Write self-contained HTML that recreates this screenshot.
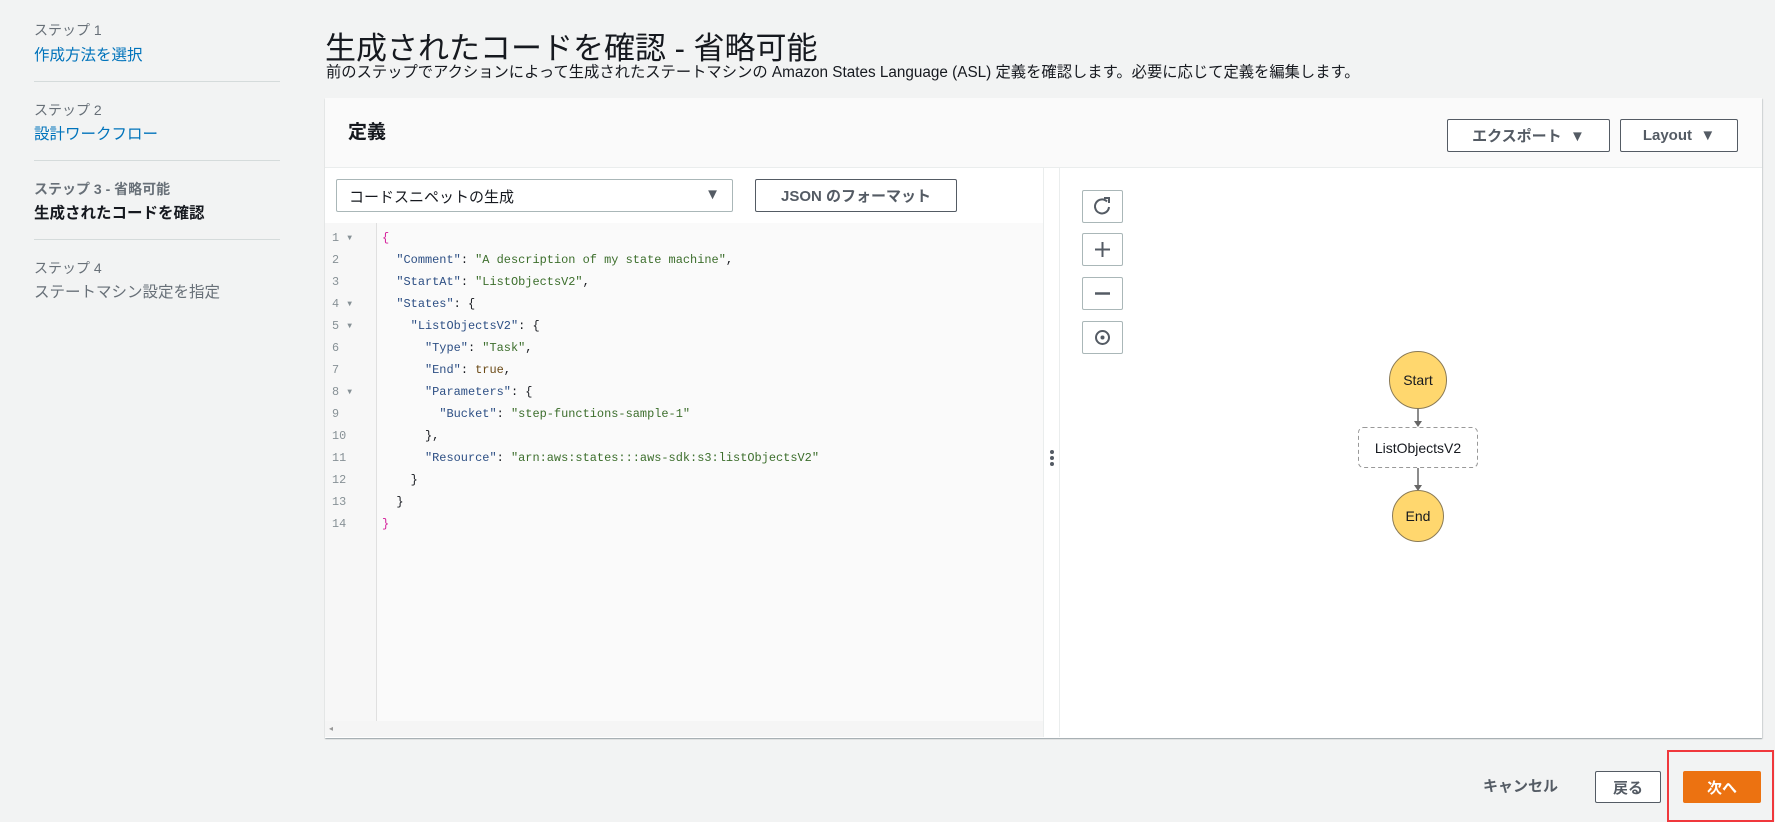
<!DOCTYPE html>
<html><head><meta charset="utf-8"><style>
*{margin:0;padding:0;box-sizing:border-box}
body{width:1775px;height:822px;background:#f2f3f3;font-family:"Liberation Sans","Noto Sans CJK JP",sans-serif;color:#16191f;position:relative;overflow:hidden}
.a{position:absolute}
.sl{font-size:14px;color:#687078}
.lk{font-size:15.5px;color:#0073bb}
.hr{position:absolute;left:34px;width:246px;height:1px;background:#d5dbdb}
.btn{position:absolute;border:1px solid #545b64;background:#fff;border-radius:2px;font-weight:bold;font-size:15px;color:#545b64;display:flex;align-items:center;justify-content:center}
.gb{position:absolute;left:1082px;width:41px;height:33px;border:1px solid #aab7b8;background:#fff;border-radius:2px}
.code{position:absolute;left:382px;top:227px;font-family:"Liberation Mono",monospace;font-size:11.95px;line-height:22px;white-space:pre;color:#16191f}
.ln{position:absolute;left:325px;top:227px;width:52px;font-family:"Liberation Mono",monospace;font-size:11.8px;line-height:22px;color:#879196;white-space:pre;padding-left:7px}
.k{color:#2d4f84}.s{color:#3c6e2c}.m{color:#d5209b}.b{color:#6b4a16}
</style></head><body>
<div class="a sl" style="left:34px;top:20px">ステップ 1</div>
<div class="a lk" style="left:34px;top:43px">作成方法を選択</div>
<div class="hr" style="top:81px"></div>
<div class="a sl" style="left:34px;top:100px">ステップ 2</div>
<div class="a lk" style="left:34px;top:122px">設計ワークフロー</div>
<div class="hr" style="top:160px"></div>
<div class="a sl" style="left:34px;top:179px;font-weight:bold">ステップ 3 - 省略可能</div>
<div class="a" style="left:34px;top:201px;font-size:15.5px;font-weight:bold">生成されたコードを確認</div>
<div class="hr" style="top:239px"></div>
<div class="a sl" style="left:34px;top:258px">ステップ 4</div>
<div class="a sl" style="left:34px;top:280px;font-size:15.5px">ステートマシン設定を指定</div>

<div class="a" style="left:325px;top:23px;font-size:31px;color:#16191f">生成されたコードを確認 - 省略可能</div>
<div class="a" style="left:326px;top:60px;font-size:15.3px;color:#16191f;white-space:nowrap">前のステップでアクションによって生成されたステートマシンの Amazon States Language (ASL) 定義を確認します。必要に応じて定義を編集します。</div>

<div class="a" style="left:325px;top:98px;width:1437px;height:640px;background:#fff;box-shadow:0 1px 1px rgba(0,28,36,.3),1px 1px 1px rgba(0,28,36,.1)">
 <div style="height:70px;background:#fafafa;border-bottom:1px solid #eaeded"></div>
</div>
<div class="a" style="left:348px;top:117px;font-size:19px;font-weight:bold">定義</div>
<div class="btn" style="left:1447px;top:119px;width:163px;height:33px">エクスポート &nbsp;▼</div>
<div class="btn" style="left:1620px;top:119px;width:118px;height:33px">Layout &nbsp;▼</div>

<div class="a" style="left:336px;top:179px;width:397px;height:33px;border:1px solid #aab7b8;background:#fff;border-radius:2px;font-size:15px;padding:6px 12px">コードスニペットの生成<span style="position:absolute;right:12px;top:6px;color:#545b64">▼</span></div>
<div class="btn" style="left:755px;top:179px;width:202px;height:33px">JSON のフォーマット</div>

<div class="a" style="left:325px;top:223px;width:718px;height:498px;background:#fafafa"></div>
<div class="a" style="left:325px;top:223px;width:52px;height:498px;background:#f7f7f7;border-right:1px solid #e0e0e0"></div>
<div class="a" style="left:325px;top:721px;width:718px;height:16px;background:#f5f5f5;font-size:8px;color:#999;padding:3px 4px">◂</div>
<div class="a" style="left:1043px;top:168px;width:17px;height:569px;background:#fff;border-left:1px solid #eaeded;border-right:1px solid #eaeded"></div>
<div class="a" style="left:1050px;top:450px;width:4px;height:4px;border-radius:2px;background:#545b64;box-shadow:0 6px 0 #545b64,0 12px 0 #545b64"></div>

<div class="ln">1 ▾
2
3
4 ▾
5 ▾
6
7
8 ▾
9
10
11
12
13
14</div>
<div class="code"><span class="m">{</span>
  <span class="k">"Comment"</span>: <span class="s">"A description of my state machine"</span>,
  <span class="k">"StartAt"</span>: <span class="s">"ListObjectsV2"</span>,
  <span class="k">"States"</span>: {
    <span class="k">"ListObjectsV2"</span>: {
      <span class="k">"Type"</span>: <span class="s">"Task"</span>,
      <span class="k">"End"</span>: <span class="b">true</span>,
      <span class="k">"Parameters"</span>: {
        <span class="k">"Bucket"</span>: <span class="s">"step-functions-sample-1"</span>
      },
      <span class="k">"Resource"</span>: <span class="s">"arn:aws:states:::aws-sdk:s3:listObjectsV2"</span>
    }
  }
<span class="m">}</span></div>

<div class="gb" style="top:190px"><svg width="39" height="31" viewBox="0 0 39 31"><path d="M24 10.5A7 7 0 1 0 26 16" fill="none" stroke="#545b64" stroke-width="2"/><path d="M21 7l5 0 0 5" fill="none" stroke="#545b64" stroke-width="2"/></svg></div>
<div class="gb" style="top:233px"><svg width="39" height="31"><path d="M19.5 8v15M12 15.5h15" stroke="#545b64" stroke-width="2"/></svg></div>
<div class="gb" style="top:277px"><svg width="39" height="31"><path d="M12 15.5h15" stroke="#545b64" stroke-width="2.5"/></svg></div>
<div class="gb" style="top:321px"><svg width="39" height="31"><circle cx="19.5" cy="15.5" r="6.5" fill="none" stroke="#545b64" stroke-width="2"/><circle cx="19.5" cy="15.5" r="2" fill="#545b64"/></svg></div>

<svg class="a" style="left:1340px;top:340px" width="160" height="210">
<circle cx="78" cy="40" r="28.5" fill="#ffd76e" stroke="#8a7a55" stroke-width="1"/>
<text x="78" y="45" text-anchor="middle" font-family="Liberation Sans" font-size="14" fill="#16191f">Start</text>
<path d="M78 68.5v15" stroke="#666" stroke-width="1.5"/><path d="M74 81l4 6 4-6z" fill="#666"/>
<rect x="18.5" y="87.5" width="119" height="40" rx="5" fill="#fff" stroke="#999" stroke-dasharray="4 3"/>
<text x="78" y="113" text-anchor="middle" font-family="Liberation Sans" font-size="14" fill="#16191f">ListObjectsV2</text>
<path d="M78 128v19" stroke="#666" stroke-width="1.5"/><path d="M74 145l4 6 4-6z" fill="#666"/>
<circle cx="78" cy="176" r="25.5" fill="#ffd76e" stroke="#8a7a55" stroke-width="1"/>
<text x="78" y="181" text-anchor="middle" font-family="Liberation Sans" font-size="14" fill="#16191f">End</text>
</svg>

<div class="a" style="left:1483px;top:775px;font-size:15px;font-weight:bold;color:#545b64">キャンセル</div>
<div class="btn" style="left:1595px;top:771px;width:66px;height:32px">戻る</div>
<div class="a" style="left:1683px;top:771px;width:78px;height:32px;background:#ec7211;border-radius:2px;color:#fff;font-weight:bold;font-size:15px;display:flex;align-items:center;justify-content:center">次へ</div>
<div class="a" style="left:1667px;top:750px;width:107px;height:72px;border:2px solid #f0383c"></div>
</body></html>
